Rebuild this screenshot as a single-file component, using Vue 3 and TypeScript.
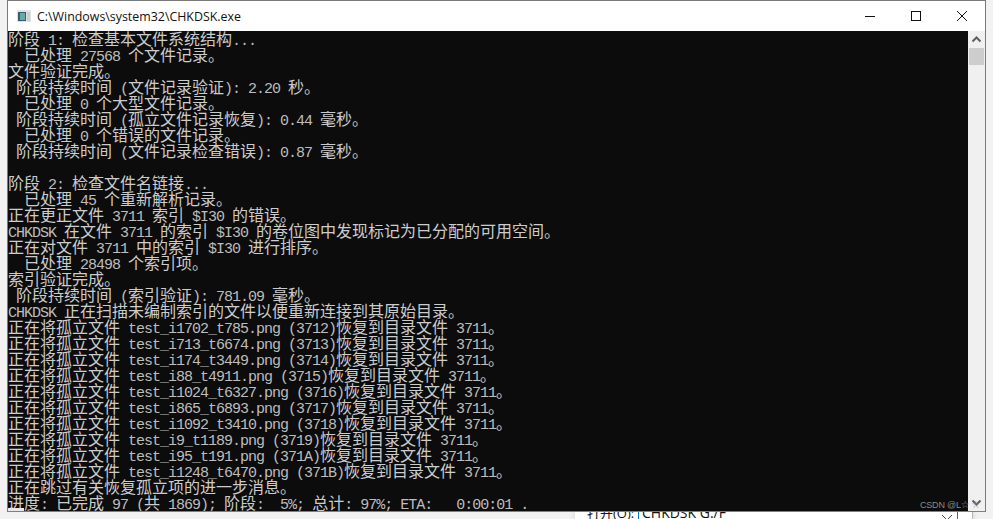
<script setup lang="ts">
interface Seg { text: string; ascii: boolean }

const orphans: [string, string][] = [
  ['test_i1702_t785.png', '3712'],
  ['test_i713_t6674.png', '3713'],
  ['test_i174_t3449.png', '3714'],
  ['test_i88_t4911.png', '3715'],
  ['test_i1024_t6327.png', '3716'],
  ['test_i865_t6893.png', '3717'],
  ['test_i1092_t3410.png', '3718'],
  ['test_i9_t1189.png', '3719'],
  ['test_i95_t191.png', '371A'],
  ['test_i1248_t6470.png', '371B'],
]

const raw: string[] = [
  '阶段 1: 检查基本文件系统结构...',
  '  已处理 27568 个文件记录。',
  '文件验证完成。',
  ' 阶段持续时间 (文件记录验证): 2.20 秒。',
  '  已处理 0 个大型文件记录。',
  ' 阶段持续时间 (孤立文件记录恢复): 0.44 毫秒。',
  '  已处理 0 个错误的文件记录。',
  ' 阶段持续时间 (文件记录检查错误): 0.87 毫秒。',
  ' ',
  '阶段 2: 检查文件名链接...',
  '  已处理 45 个重新解析记录。',
  '正在更正文件 3711 索引 $I30 的错误。',
  'CHKDSK 在文件 3711 的索引 $I30 的卷位图中发现标记为已分配的可用空间。',
  '正在对文件 3711 中的索引 $I30 进行排序。',
  '  已处理 28498 个索引项。',
  '索引验证完成。',
  ' 阶段持续时间 (索引验证): 781.09 毫秒。',
  'CHKDSK 正在扫描未编制索引的文件以便重新连接到其原始目录。',
  ...orphans.map(([f, n]) => `正在将孤立文件 ${f} (${n})恢复到目录文件 3711。`),
  '正在跳过有关恢复孤立项的进一步消息。',
  '进度: 已完成 97 (共 1869); 阶段:  5%; 总计: 97%; ETA:   0:00:01 .',
]

const lines: Seg[][] = raw.map((l) =>
  (l.match(/[\x00-\x7f]+|[^\x00-\x7f]+/g) ?? []).map((text) => ({
    text,
    ascii: /^[\x00-\x7f]/.test(text),
  })),
)
</script>

<template>
  <div class="page">
    <div class="window">
      <div class="titlebar">
        <svg class="app-icon" width="14" height="12" viewBox="0 0 14 12">
          <rect x="0" y="0" width="14" height="12" fill="#dfe3e6" />
          <rect x="1" y="2" width="8" height="9" fill="#2f5f7f" />
          <rect x="3" y="3" width="5" height="7" fill="#6fa8a0" />
          <rect x="10" y="2" width="3" height="9" fill="#c9d3c4" />
        </svg>
        <span class="title">C:\Windows\system32\CHKDSK.exe</span>
        <div class="controls">
          <div class="ctl">
            <svg width="12" height="12" viewBox="0 0 12 12"><path d="M1 6.5H11" stroke="#111" fill="none" /></svg>
          </div>
          <div class="ctl">
            <svg width="12" height="12" viewBox="0 0 12 12"><rect x="1.5" y="1.5" width="9" height="9" stroke="#111" fill="none" /></svg>
          </div>
          <div class="ctl">
            <svg width="12" height="12" viewBox="0 0 12 12"><path d="M1 1L11 11M11 1L1 11" stroke="#111" fill="none" /></svg>
          </div>
        </div>
      </div>
      <div class="body">
        <div class="console" lang="zh-CN">
          <div v-for="(line, i) in lines" :key="i" class="line">
            <span v-for="(s, j) in line" :key="j" :class="s.ascii ? 'asc' : 'cjk'">{{ s.text }}</span>
          </div>
          <div class="cursor"></div>
        </div>
        <div class="scrollbar">
          <svg class="arrow" width="17" height="17" viewBox="0 0 17 17">
            <path d="M4.5 10.5L8.5 6.5L12.5 10.5" stroke="#606060" stroke-width="2" fill="none" />
          </svg>
          <div class="thumb"></div>
          <div class="track"></div>
          <svg class="arrow" width="17" height="17" viewBox="0 0 17 17">
            <path d="M4.5 6.5L8.5 10.5L12.5 6.5" stroke="#606060" stroke-width="2" fill="none" />
          </svg>
        </div>
      </div>
      <span class="watermark">CSDN @L<span class="stars">☆☆</span></span>
    </div>
    <div class="under">
      <div class="dialog">
        <span class="open-label">打开(O):</span>
        <div class="field">
          <span>CHKDSK G:/F</span>
          <svg width="12" height="7" viewBox="0 0 12 7"><path d="M1 0L6 5L11 0" stroke="#444" fill="none" /></svg>
        </div>
      </div>
    </div>
  </div>
</template>

<style scoped>
.page {
  width: 993px;
  height: 519px;
  overflow: hidden;
  background: #f2f2f2;
  display: flex;
  flex-direction: column;
}
.window {
  position: relative;
  box-sizing: border-box;
  flex: none;
  width: 979px;
  height: 512px;
  margin-left: 7px;
  border: 1px solid #7a7a7a;
  border-bottom-color: #808080;
  background: #fff;
  display: flex;
  flex-direction: column;
  z-index: 1;
}
.titlebar {
  flex: none;
  height: 30px;
  display: flex;
  align-items: center;
  padding-left: 9px;
  background: #fff;
}
.app-icon {
  flex: none;
}
.title {
  margin-left: 6px;
  font-family: "Open Sans", "Noto Sans", sans-serif;
  font-size: 12.4px;
  color: #111;
  white-space: pre;
}
.controls {
  margin-left: auto;
  display: flex;
}
.ctl {
  width: 46px;
  height: 30px;
  display: flex;
  align-items: center;
  justify-content: center;
}
.body {
  flex: 1;
  min-height: 0;
  display: flex;
}
.console {
  position: relative;
  flex: 1;
  min-width: 0;
  background: #0c0c0c;
  color: #cccccc;
  overflow: hidden;
}
.line {
  height: 16px;
  line-height: 16px;
  white-space: pre;
  position: relative;
  top: -1px;
}
.asc,
.cjk {
  display: inline-block;
  height: 16px;
  line-height: 16px;
  vertical-align: baseline;
}
.asc {
  font-family: "Liberation Mono", monospace;
  font-size: 15px;
  letter-spacing: -1px;
  color: #bdbdbd;
}
.cjk {
  font-family: "Noto Sans CJK SC", sans-serif;
  font-size: 16px;
}
.cursor {
  position: absolute;
  left: 0;
  bottom: 0;
  width: 16px;
  height: 3px;
  background: #e8e8e8;
}
.scrollbar {
  flex: none;
  width: 17px;
  background: #f0f0f0;
  display: flex;
  flex-direction: column;
}
.arrow {
  flex: none;
}
.thumb {
  flex: none;
  height: 17px;
  margin: 0 1px;
  background: #cdcdcd;
}
.track {
  flex: 1;
}
.watermark {
  position: absolute;
  left: 912px;
  bottom: 0;
  line-height: 12px;
  font-family: "Liberation Sans", sans-serif;
  font-size: 9px;
  letter-spacing: -0.2px;
  color: #8a8a8a;
  white-space: pre;
}
.stars {
  font-family: "DejaVu Sans", sans-serif;
  font-size: 10px;
  letter-spacing: 1.5px;
  color: #9a9a9a;
}
.under {
  flex: none;
  height: 7px;
  overflow: hidden;
  padding-left: 575px;
}
.dialog {
  box-sizing: border-box;
  width: 398px;
  height: 7px;
  background: #fff;
  border-right: 1px solid #b5b5b5;
  box-shadow: 0 0 6px rgba(0, 0, 0, 0.18);
  display: flex;
  align-items: flex-end;
  padding-left: 12px;
  font-family: "Open Sans", "Noto Sans CJK SC", sans-serif;
  font-size: 14px;
  color: #111;
}
.open-label {
  flex: none;
  width: 51px;
  line-height: 12px;
  font-size: 13px;
  white-space: pre;
}
.field {
  flex: none;
  box-sizing: border-box;
  width: 320px;
  height: 7px;
  border-left: 1px solid #0078d4;
  border-right: 1px solid #0078d4;
  padding: 0 2px 0 3px;
  display: flex;
  align-items: flex-end;
  justify-content: space-between;
  line-height: 12px;
  white-space: pre;
}
.field svg {
  margin-right: 2px;
  margin-bottom: -3px;
}
</style>
